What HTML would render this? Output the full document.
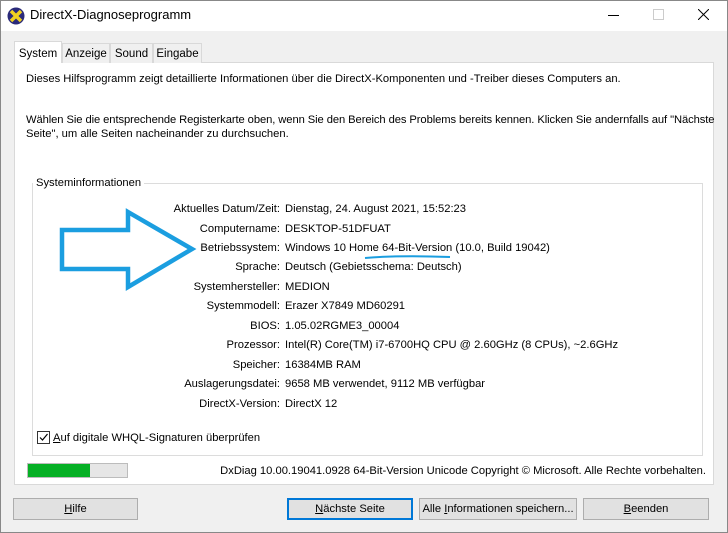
<!DOCTYPE html>
<html><head><meta charset="utf-8"><style>
*{margin:0;padding:0;box-sizing:border-box}
body{width:728px;height:533px;background:#f0f0f0;font-family:"Liberation Sans",sans-serif;font-size:11.2px;line-height:16px;color:#000;position:relative;overflow:hidden}
.a{position:absolute;white-space:nowrap}
.title{left:0;top:0;width:728px;height:31px;background:#fff;border:1px solid #888;border-bottom:none}
.tab{top:43px;height:20px;border:1px solid #d9d9d9;border-bottom:none;background:#f0f0f0;padding:2px 0;text-align:center;font-size:11.5px}
.panel{left:14px;top:62px;width:700px;height:423px;background:#fff;border:1px solid #d9d9d9}
.grp{left:32px;top:183px;width:671px;height:273px;border:1px solid #dcdcdc;background:#fff}
.lbl{right:448px;text-align:right}
.val{left:285px}
.btn{top:498px;height:22px;border:1px solid #adadad;background:#e1e1e1;text-align:center;line-height:20px}
</style></head><body>
<div class="a title"></div>
<svg class="a" style="left:7px;top:7px" width="18" height="18" viewBox="0 0 18 18"><circle cx="9" cy="9" r="8.5" fill="#2a2a7a"/><path d="M4 4 L14 14 M14 4 L4 14" stroke="#f0d020" stroke-width="3.5"/></svg>
<div class="a" style="left:30px;top:7px;font-size:13px">DirectX-Diagnoseprogramm</div>
<div class="a" style="left:608px;top:15px;width:11px;height:1px;background:#000"></div>
<div class="a" style="left:653px;top:9px;width:11px;height:11px;border:1px solid #ccc"></div>
<svg class="a" style="left:698px;top:9px" width="11" height="11"><path d="M0 0L11 11M11 0L0 11" stroke="#000" stroke-width="1"/></svg>
<div class="a panel"></div>
<div class="a tab" style="left:14px;top:41px;height:22px;background:#fff;width:48px;padding-top:4px">System</div>
<div class="a tab" style="left:62px;width:48px">Anzeige</div>
<div class="a tab" style="left:110px;width:43px">Sound</div>
<div class="a tab" style="left:153px;width:49px">Eingabe</div>
<div class="a" style="left:26px;top:71px">Dieses Hilfsprogramm zeigt detaillierte Informationen über die DirectX-Komponenten und -Treiber dieses Computers an.</div>
<div class="a" style="left:26px;top:112px;letter-spacing:-0.08px">Wählen Sie die entsprechende Registerkarte oben, wenn Sie den Bereich des Problems bereits kennen. Klicken Sie andernfalls auf "Nächste</div>
<div class="a" style="left:26px;top:126px">Seite", um alle Seiten nacheinander zu durchsuchen.</div>
<div class="a grp"></div>
<div class="a" style="left:33px;top:175px;background:#fff;padding:0 3px">Systeminformationen</div>
<div class="a lbl" style="top:201px">Aktuelles Datum/Zeit:</div><div class="a val" style="top:201px">Dienstag, 24. August 2021, 15:52:23</div>
<div class="a lbl" style="top:221px">Computername:</div><div class="a val" style="top:221px">DESKTOP-51DFUAT</div>
<div class="a lbl" style="top:240px">Betriebssystem:</div><div class="a val" style="top:240px">Windows 10 Home 64-Bit-Version (10.0, Build 19042)</div>
<div class="a lbl" style="top:259px">Sprache:</div><div class="a val" style="top:259px">Deutsch (Gebietsschema: Deutsch)</div>
<div class="a lbl" style="top:279px">Systemhersteller:</div><div class="a val" style="top:279px">MEDION</div>
<div class="a lbl" style="top:298px">Systemmodell:</div><div class="a val" style="top:298px">Erazer X7849 MD60291</div>
<div class="a lbl" style="top:318px">BIOS:</div><div class="a val" style="top:318px">1.05.02RGME3_00004</div>
<div class="a lbl" style="top:337px">Prozessor:</div><div class="a val" style="top:337px">Intel(R) Core(TM) i7-6700HQ CPU @ 2.60GHz (8 CPUs), ~2.6GHz</div>
<div class="a lbl" style="top:357px">Speicher:</div><div class="a val" style="top:357px">16384MB RAM</div>
<div class="a lbl" style="top:376px">Auslagerungsdatei:</div><div class="a val" style="top:376px">9658 MB verwendet, 9112 MB verfügbar</div>
<div class="a lbl" style="top:396px">DirectX-Version:</div><div class="a val" style="top:396px">DirectX 12</div>
<svg class="a" style="left:0;top:0" width="728" height="533"><path d="M62 230 L128 230 L128 212 L192 249 L128 287 L128 269 L62 269 Z" fill="none" stroke="#1b9ee0" stroke-width="4.5" stroke-linejoin="miter"/><path d="M365 258 Q400 255 450 257" stroke="#1b9ee0" stroke-width="2" fill="none"/></svg>
<div class="a" style="left:37px;top:431px;width:13px;height:13px;border:1px solid #333;background:#fff"></div>
<svg class="a" style="left:38px;top:432px" width="11" height="11"><path d="M2 5.5L4.5 8L9.5 2" stroke="#000" stroke-width="1.2" fill="none"/></svg>
<div class="a" style="left:53px;top:430px"><u>A</u>uf digitale WHQL-Signaturen überprüfen</div>
<div class="a" style="left:27px;top:463px;width:101px;height:15px;border:1px solid #bcbcbc;background:#e6e6e6"><div style="width:62px;height:13px;background:#06b025"></div></div>
<div class="a" style="right:22px;top:463px">DxDiag 10.00.19041.0928 64-Bit-Version Unicode Copyright © Microsoft. Alle Rechte vorbehalten.</div>
<div class="a btn" style="left:13px;width:125px"><u>H</u>ilfe</div>
<div class="a btn" style="left:287px;width:126px;border:2px solid #0078d7;line-height:18px"><u>N</u>ächste Seite</div>
<div class="a btn" style="left:419px;width:158px">Alle <u>I</u>nformationen speichern...</div>
<div class="a btn" style="left:583px;width:126px"><u>B</u>eenden</div>
<div class="a" style="left:0;top:532px;width:728px;height:1px;background:#888"></div>
<div class="a" style="left:0;top:0;width:1px;height:533px;background:#888"></div>
<div class="a" style="left:727px;top:0;width:1px;height:533px;background:#888"></div>
</body></html>
